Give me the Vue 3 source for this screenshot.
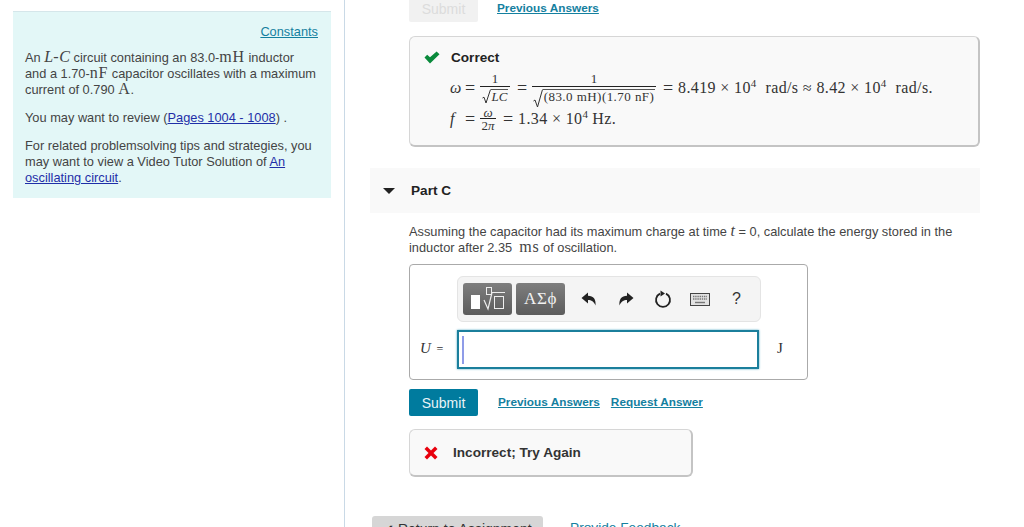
<script setup>
const undoPath = 'M7 1.5 L0.5 7 L7 12.5 V9 C10.5 9 12.8 10.5 14.5 14.5 C15.2 8.5 12.5 4.8 7 4.8 Z'
</script>

<template>
  <div class="page">
    <aside class="side">
      <section class="info">
        <a class="constants">Constants</a>
        <p>An <i class="m big">L</i><span class="mr big">-</span><i class="m big">C</i> circuit containing an 83.0-<span class="mr big">mH</span> inductor<br>and a 1.70-<span class="mr big">nF</span> capacitor oscillates with a maximum<br>current of 0.790 <span class="mr big">A</span>.</p>
        <p>You may want to review (<a class="blue">Pages 1004 - 1008</a>) .</p>
        <p>For related problemsolving tips and strategies, you may want to view a Video Tutor Solution of <a class="blue">An oscillating circuit</a>.</p>
      </section>
    </aside>

    <main class="main">
      <div class="inner top-actions">
        <button class="btn disabled">Submit</button>
        <a class="link">Previous Answers</a>
      </div>

      <div class="inner">
        <div class="feedback correct">
          <div class="fb-head">
            <svg class="check" width="16" height="13" viewBox="0 0 16 13"><path d="M0.5 6.5 L3.2 3.8 L6 6.2 L12.6 0.5 L15.5 3.2 L6 12.5 Z" fill="#0a8a3c"/></svg>
            <strong>Correct</strong>
          </div>
          <div class="eq">
            <div class="eq-line">
              <i class="sym">ω</i><span class="op">=</span>
              <span class="frac"><span>1</span><span class="den"><svg class="rad" width="9" height="15" viewBox="0 0 9 15"><path d="M0.5 9 L2 8.2 L4 14 L8.5 0.5" fill="none" stroke="#333"/></svg><i class="over">LC</i></span></span>
              <span class="op">=</span>
              <span class="frac wide"><span>1</span><span class="den"><svg class="rad" width="10" height="19" viewBox="0 0 10 19"><path d="M0.5 12 L2 11 L4.5 18 L9.5 0.5" fill="none" stroke="#333"/></svg><span class="over">(83.0 mH)(1.70 nF)</span></span></span>
              <span class="op">=</span>
              <span class="val">8.419 × 10<sup>4</sup>&nbsp; rad/s ≈ 8.42 × 10<sup>4</sup>&nbsp; rad/s.</span>
            </div>
            <div class="eq-line second">
              <i class="sym f">f</i><span class="op">=</span>
              <span class="frac"><i>ω</i><span class="den">2<i>π</i></span></span>
              <span class="op">=</span>
              <span class="val">1.34 × 10<sup>4</sup><span class="gap"></span>Hz.</span>
            </div>
          </div>
        </div>
      </div>

      <div class="part-head">
        <span class="caret"></span>
        <strong>Part C</strong>
      </div>

      <div class="inner">
        <p class="question">Assuming the capacitor had its maximum charge at time <i class="m big">t</i> = 0, calculate the energy stored in the inductor after 2.35 &nbsp;<span class="mr big">ms</span> of oscillation.</p>

        <div class="answer">
          <div class="toolbar">
            <button class="tool-btn matrix" aria-label="Templates">
              <svg width="38" height="26" viewBox="0 0 38 26">
                <rect x="2" y="9" width="9" height="14" fill="#fff"/>
                <rect x="17.5" y="1.5" width="5" height="7" fill="none" stroke="#eee"/>
                <path d="M15 14 L19 23 L23 6.5 H36" fill="none" stroke="#eee" stroke-width="1.2"/>
                <rect x="25.5" y="10.5" width="9" height="12" fill="none" stroke="#eee"/>
              </svg>
            </button>
            <button class="tool-btn greek">ΑΣϕ</button>
            <span class="tools">
              <svg width="16" height="16" viewBox="0 0 16 16"><path :d="undoPath" fill="#222"/></svg>
              <svg class="mirror" width="16" height="16" viewBox="0 0 16 16"><path :d="undoPath" fill="#222"/></svg>
              <svg width="18" height="18" viewBox="0 0 18 18"><path d="M6 3.6 A7 7 0 1 0 12 3.6" fill="none" stroke="#222" stroke-width="1.8"/><path d="M6.5 0.5 L11 3.5 L6.5 6.5 Z" fill="#222"/></svg>
              <svg width="20" height="13" viewBox="0 0 20 13"><rect x="0.5" y="0.5" width="19" height="12" fill="#e2e2e2" stroke="#444"/><path d="M3 3.5H17M3 6H17" stroke="#777" stroke-dasharray="1.4 .8" stroke-width="1.4"/><path d="M5 9.5H15" stroke="#777" stroke-width="1.4"/></svg>
              <span class="help">?</span>
            </span>
          </div>
          <div class="input-row">
            <span class="var"><i>U</i> <span class="eqs">=</span></span>
            <div class="input"><span class="cursor"></span></div>
            <span class="unit">J</span>
          </div>
        </div>

        <div class="actions">
          <button class="btn primary">Submit</button>
          <a class="link">Previous Answers</a>
          <a class="link">Request Answer</a>
        </div>

        <div class="feedback incorrect">
          <svg width="14" height="14" viewBox="0 0 14 14"><path d="M3 0.5 L7 4.5 L11 0.5 L13.5 3 L9.5 7 L13.5 11 L11 13.5 L7 9.5 L3 13.5 L0.5 11 L4.5 7 L0.5 3 Z" fill="#e8000d"/></svg>
          <strong>Incorrect; Try Again</strong>
        </div>
      </div>

      <div class="footer">
        <div class="return"><span class="chev">❮</span> Return to Assignment</div>
        <a class="provide">Provide Feedback</a>
      </div>
    </main>
  </div>
</template>

<style scoped>
.page {
  display: flex;
  height: 527px;
  overflow: hidden;
  font-family: "Liberation Sans", Arial, sans-serif;
  font-size: 13px;
  color: #333;
  background: #fff;
}
.side {
  box-sizing: border-box;
  width: 345px;
  flex: none;
  padding: 11px 13px 0;
  border-right: 1px solid #c9d9e6;
}
.info {
  box-sizing: border-box;
  height: 187px;
  background: #e3f7f7;
  border-top: 1px solid #d5e6ea;
  padding: 12px 13px 0 12px;
  font-size: 12.8px;
  line-height: 16px;
  color: #444;
}
.constants {
  display: block;
  text-align: right;
  color: #14809f;
  text-decoration: underline;
  margin-bottom: 10px;
}
.info p { margin: 0 0 12px; }
.blue { color: #1f2fa8; text-decoration: underline; }
.m, .mr { font-family: "Liberation Serif", serif; }
.big { font-size: 16px; line-height: 0; }
.mr { letter-spacing: .8px; }

.main {
  flex: 1;
  min-width: 0;
  margin-top: -5px;
  padding: 0 44px 0 25px;
}
.inner { padding-left: 39px; }
.top-actions {
  display: flex;
  align-items: flex-start;
  gap: 19px;
  height: 41px;
}
.btn {
  box-sizing: border-box;
  width: 69px;
  height: 27px;
  border: 0;
  border-radius: 2px;
  font: 14px "Liberation Sans", Arial, sans-serif;
}
.btn.disabled { background: #f1f1f1; color: #dcdcdc; }
.btn.primary { background: #007b9e; color: #e9f4f7; }
.link {
  font-size: 11.8px;
  font-weight: 700;
  color: #14809f;
  text-decoration: underline;
  line-height: 24px;
}
.top-actions .link { line-height: 26px; }
.feedback {
  box-sizing: border-box;
  background: #f9f9f9;
  border: 1px solid #d6d6d6;
  border-right: 2px solid #c4c4c4;
  border-bottom: 2px solid #c4c4c4;
  border-radius: 6px;
}
.correct { height: 111px; padding: 12px 14px; }
.fb-head {
  display: flex;
  align-items: center;
  gap: 11px;
  font-size: 13.6px;
  line-height: 17px;
  color: #222;
}
.eq {
  margin: 6px 0 0 26px;
  font-family: "Liberation Serif", serif;
  font-size: 16px;
  color: #333;
}
.eq-line {
  display: flex;
  align-items: center;
  height: 32px;
  white-space: nowrap;
}
.eq-line.second { height: 24px; margin-top: 3px; }
.sym { width: 10px; }
.op { width: 12px; margin: 0 4px; font-size: 18px; text-align: center; line-height: 1; }
.val { letter-spacing: .38px; }
.gap { display: inline-block; width: 4px; }
.frac {
  display: inline-flex;
  flex-direction: column;
  align-items: center;
  font-size: 13px;
  line-height: 14px;
  width: 30px;
  margin-right: 2px;
}
.second .frac { width: 16px; line-height: 11.5px; }
.frac .den {
  height: 16px;
  border-top: 1px solid #222;
  display: flex;
  justify-content: center;
  align-items: flex-start;
  width: 100%;
  padding-top: 2px;
}
.second .frac .den { height: auto; padding-top: 1px; }
.frac.wide { width: 124px; }
.frac.wide .over { letter-spacing: .45px; white-space: nowrap; }
.frac.wide .den { padding-top: 2px; }
.over { border-top: 1px solid #555; line-height: 12px; padding: 1px 1px 0; }
.rad { flex: none; }
sup { font-size: 11px; line-height: 0; }

.part-head {
  display: flex;
  align-items: center;
  height: 45px;
  margin-top: 21px;
  background: #f9f9f9;
  font-size: 13.6px;
  color: #222;
}
.part-head strong { margin-left: 16px; }
.caret {
  width: 0;
  height: 0;
  margin-left: 13px;
  border: 6px solid transparent;
  border-top: 6px solid #222;
  border-bottom: 0;
}
.question {
  margin: 11px 0 8px;
  font-size: 12.8px;
  line-height: 16px;
  color: #444;
}
.answer {
  box-sizing: border-box;
  width: 399px;
  height: 116px;
  border: 1px solid #aaa;
  border-radius: 4px;
  padding: 11px 47px 0 47px;
}
.toolbar {
  box-sizing: border-box;
  display: flex;
  align-items: center;
  width: 304px;
  height: 46px;
  padding-left: 5px;
  gap: 4px;
  background: #f4f4f4;
  border: 1px solid #e4e4e4;
  border-radius: 6px;
}
.tool-btn {
  box-sizing: border-box;
  width: 49px;
  height: 32px;
  padding: 0;
  border: 0;
  border-radius: 3px;
  background: linear-gradient(#7e7e7e, #5c5c5c);
  color: #f2f2f2;
  display: flex;
  align-items: center;
  justify-content: center;
}
.greek { font: 17px "Liberation Serif", serif; letter-spacing: .6px; }
.tools {
  display: grid;
  grid-template-columns: repeat(5, 37px);
  justify-items: center;
  align-items: center;
  margin-left: 1px;
}
.mirror { transform: scaleX(-1); }
.help { font-size: 16px; color: #333; }
.input-row {
  position: relative;
  display: flex;
  align-items: center;
  margin-top: 8px;
}
.var {
  position: absolute;
  left: -37px;
  top: 10px;
  font: 15px "Liberation Serif", serif;
  color: #333;
}
.eqs { font-size: 12px; margin-left: 2px; }
.input {
  box-sizing: border-box;
  width: 302px;
  height: 39px;
  flex: none;
  border: 2px solid #1b7f9c;
  box-shadow: 0 0 2px #4fa9c3;
  display: flex;
  align-items: center;
  padding-left: 3px;
}
.cursor { width: 2px; height: 28px; background: #8f9ce8; }
.unit {
  position: absolute;
  left: 320px;
  top: 10px;
  font: 15px "Liberation Serif", serif;
  color: #333;
}
.actions {
  display: flex;
  align-items: center;
  margin-top: 9px;
  gap: 11px;
}
.actions .btn { margin-right: 9px; }
.actions .link { margin-top: -2px; }
.incorrect {
  display: flex;
  align-items: center;
  gap: 15px;
  width: 284px;
  height: 48px;
  margin-top: 13px;
  padding: 0 0 0 14px;
  font-size: 13.6px;
  color: #333;
}
.footer {
  display: flex;
  gap: 27px;
  margin-top: 39px;
  margin-left: 2px;
}
.return {
  box-sizing: border-box;
  width: 171px;
  height: 30px;
  border-radius: 3px 3px 0 0;
  background: #d6d6d6;
  color: #333;
  font-size: 14px;
  line-height: 16px;
  padding: 5px 0 0 13px;
  white-space: nowrap;
}
.chev { font-size: 11px; }
.provide {
  color: #14809f;
  font-size: 13.7px;
  text-decoration: underline;
  line-height: 16px;
  padding-top: 4px;
}
</style>

<style>
html, body { margin: 0; height: 527px; overflow: hidden; background: #fff; }
</style>
